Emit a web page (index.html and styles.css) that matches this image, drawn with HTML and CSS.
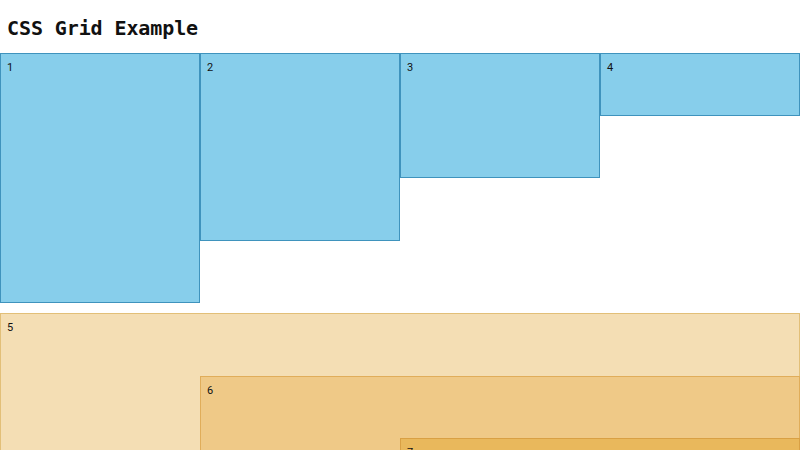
FILE: index.html
```html
<!DOCTYPE html>
<html lang="en">
<head>
    <meta charset="UTF-8">
    <meta name="viewport" content="width=device-width, initial-scale=1.0">
    <title>CSS Grid Example</title>
    <link rel="stylesheet" href="styles.css">
</head>
<body>
    <h1 class="title">CSS Grid Example</h1>

    <!-- staircase: each item spans fewer rows than the one before -->
    <div class="grid stairs">
        <div class="item blue span-4">1</div>
        <div class="item blue span-3">2</div>
        <div class="item blue span-2">3</div>
        <div class="item blue span-1">4</div>
    </div>

    <!-- overlapping items, placed on the same grid lines -->
    <div class="grid layers">
        <div class="item warm-1 layer-1">5</div>
        <div class="item warm-2 layer-2">6</div>
        <div class="item warm-3 layer-3">7</div>
    </div>
</body>
</html>
```

FILE: styles.css
```css
* {
    box-sizing: border-box;
    margin: 0;
    padding: 0;
}
body {
    background: #fff;
    color: #111;
    font-family: Roboto, "Liberation Sans", sans-serif;
}
.title {
    font-family: "DejaVu Sans Mono", "Liberation Mono", monospace;
    font-size: 20px;
    font-weight: bold;
    line-height: 24px;
    padding: 16px 7px 13px;
    letter-spacing: -0.1px;
}
.grid {
    display: grid;
    grid-template-columns: repeat(4, 200px);
    grid-auto-rows: 62.5px;
}
.stairs {
    margin-bottom: 10px;
}
.item {
    border: 1px solid;
    padding: 7px 6px;
    font-size: 11px;
    line-height: 13px;
}
.blue {
    background: #87ceeb;
    border-color: #3f93bd;
}
.span-1 { grid-row: span 1; }
.span-2 { grid-row: span 2; }
.span-3 { grid-row: span 3; }
.span-4 { grid-row: span 4; }

.warm-1 {
    background: #f4deb4;
    border-color: #e2bf78;
}
.warm-2 {
    background: #efc987;
    border-color: #e0ad5a;
}
.warm-3 {
    background: #e9b85c;
    border-color: #d9a044;
}
.layer-1 {
    grid-column: 1 / 5;
    grid-row: 1 / 5;
}
.layer-2 {
    grid-column: 2 / 5;
    grid-row: 2 / 5;
}
.layer-3 {
    grid-column: 3 / 5;
    grid-row: 3 / 5;
}
```
